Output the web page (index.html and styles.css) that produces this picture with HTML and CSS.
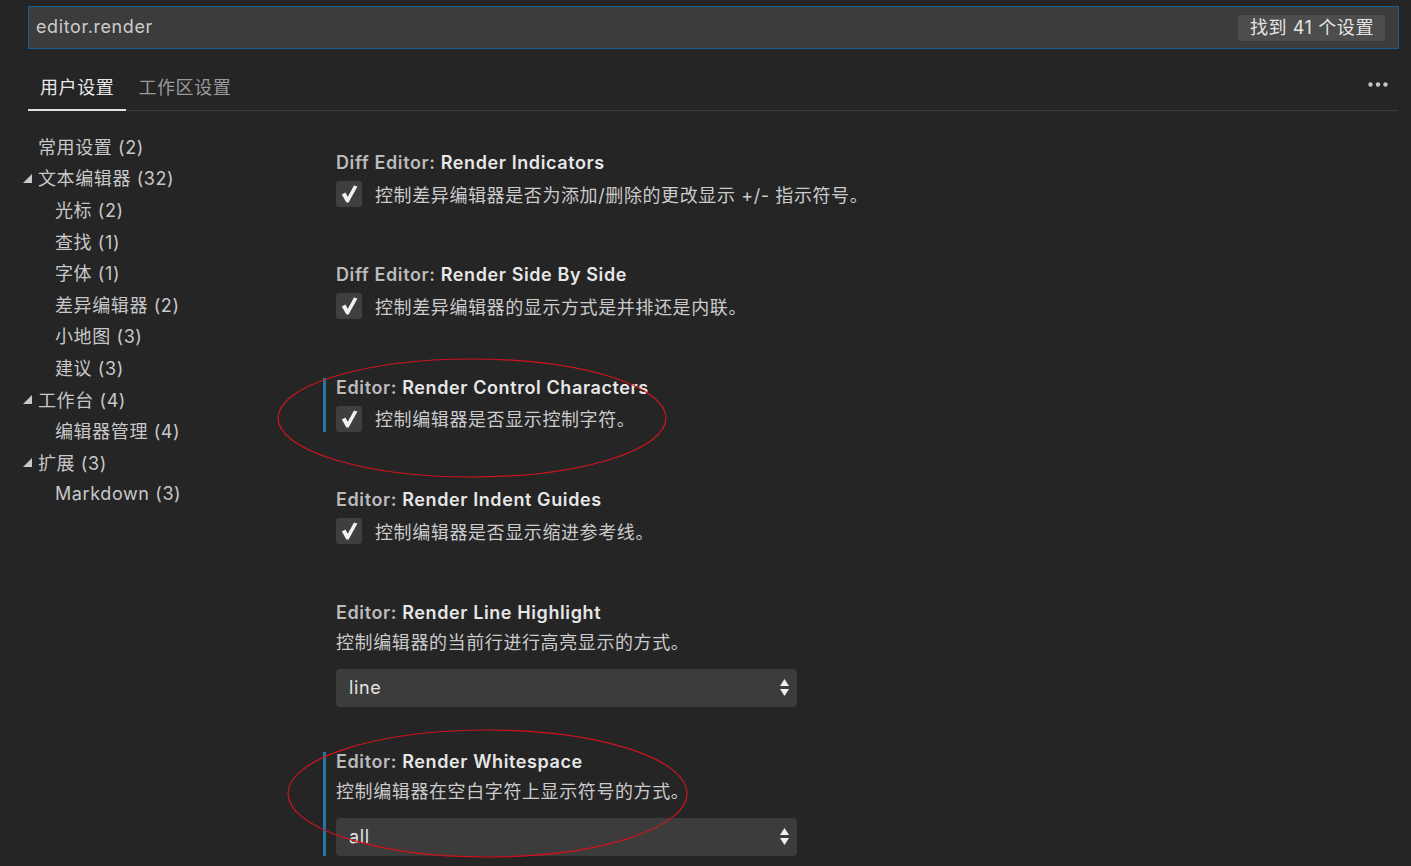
FILE: index.html
```html
<!DOCTYPE html>
<html lang="zh-CN">
<head>
  <meta charset="UTF-8" />
  <title>设置 - editor.render</title>
  <link rel="stylesheet" href="styles.css">
</head>
<body>
  <div class="page">
    <div class="search">
      <span class="search-text">editor.render</span>
      <span class="badge">找到 41 个设置</span>
    </div>

    <div class="tabs">
      <div class="tab active">用户设置</div>
      <div class="tab">工作区设置</div>
      <svg class="more" width="20" height="5" viewBox="0 0 20 5">
        <circle cx="2.5" cy="2.5" r="2.2" fill="#c5c5c5"/>
        <circle cx="10" cy="2.5" r="2.2" fill="#c5c5c5"/>
        <circle cx="17.5" cy="2.5" r="2.2" fill="#c5c5c5"/>
      </svg>
    </div>

    <div class="main">
      <ul class="toc">
        <li class="toc-item"><span class="twisty"></span>常用设置 (2)</li>
        <li class="toc-item"><span class="twisty"><svg width="9" height="9" viewBox="0 0 9 9"><polygon points="9,0 9,9 0,9" fill="#c8c8c8"/></svg></span>文本编辑器 (32)</li>
        <li class="toc-item child"><span class="twisty"></span>光标 (2)</li>
        <li class="toc-item child"><span class="twisty"></span>查找 (1)</li>
        <li class="toc-item child"><span class="twisty"></span>字体 (1)</li>
        <li class="toc-item child"><span class="twisty"></span>差异编辑器 (2)</li>
        <li class="toc-item child"><span class="twisty"></span>小地图 (3)</li>
        <li class="toc-item child"><span class="twisty"></span>建议 (3)</li>
        <li class="toc-item"><span class="twisty"><svg width="9" height="9" viewBox="0 0 9 9"><polygon points="9,0 9,9 0,9" fill="#c8c8c8"/></svg></span>工作台 (4)</li>
        <li class="toc-item child"><span class="twisty"></span>编辑器管理 (4)</li>
        <li class="toc-item"><span class="twisty"><svg width="9" height="9" viewBox="0 0 9 9"><polygon points="9,0 9,9 0,9" fill="#c8c8c8"/></svg></span>扩展 (3)</li>
        <li class="toc-item child"><span class="twisty"></span>Markdown (3)</li>
      </ul>

      <div class="settings">
        <div class="setting">
          <div class="title"><span class="cat">Diff Editor:</span> Render Indicators</div>
          <div class="check-row">
            <span class="checkbox"><svg width="26" height="26" viewBox="0 0 26 26"><path d="M5.8 13.6 L9.4 11.4 L11.8 15.8 L18 4.4 L21.4 5.6 L12.6 21.6 L10.4 21.6 Z" fill="#f2f2f2"/></svg></span>
            <span class="desc">控制差异编辑器是否为添加/删除的更改显示 +/- 指示符号。</span>
          </div>
        </div>

        <div class="setting">
          <div class="title"><span class="cat">Diff Editor:</span> Render Side By Side</div>
          <div class="check-row">
            <span class="checkbox"><svg width="26" height="26" viewBox="0 0 26 26"><path d="M5.8 13.6 L9.4 11.4 L11.8 15.8 L18 4.4 L21.4 5.6 L12.6 21.6 L10.4 21.6 Z" fill="#f2f2f2"/></svg></span>
            <span class="desc">控制差异编辑器的显示方式是并排还是内联。</span>
          </div>
        </div>

        <div class="setting focused">
          <div class="title"><span class="cat">Editor:</span> Render Control Characters</div>
          <div class="check-row">
            <span class="checkbox"><svg width="26" height="26" viewBox="0 0 26 26"><path d="M5.8 13.6 L9.4 11.4 L11.8 15.8 L18 4.4 L21.4 5.6 L12.6 21.6 L10.4 21.6 Z" fill="#f2f2f2"/></svg></span>
            <span class="desc">控制编辑器是否显示控制字符。</span>
          </div>
        </div>

        <div class="setting">
          <div class="title"><span class="cat">Editor:</span> Render Indent Guides</div>
          <div class="check-row">
            <span class="checkbox"><svg width="26" height="26" viewBox="0 0 26 26"><path d="M5.8 13.6 L9.4 11.4 L11.8 15.8 L18 4.4 L21.4 5.6 L12.6 21.6 L10.4 21.6 Z" fill="#f2f2f2"/></svg></span>
            <span class="desc">控制编辑器是否显示缩进参考线。</span>
          </div>
        </div>

        <div class="setting with-select">
          <div class="title"><span class="cat">Editor:</span> Render Line Highlight</div>
          <div class="desc block">控制编辑器的当前行进行高亮显示的方式。</div>
          <div class="select">
            <span>line</span>
            <svg width="9" height="18" viewBox="0 0 9 18"><polygon points="4.5,0 9,7 0,7" fill="#f0f0f0"/><polygon points="0,10 9,10 4.5,17" fill="#f0f0f0"/></svg>
          </div>
        </div>

        <div class="setting with-select focused">
          <div class="title"><span class="cat">Editor:</span> Render Whitespace</div>
          <div class="desc block">控制编辑器在空白字符上显示符号的方式。</div>
          <div class="select">
            <span>all</span>
            <svg width="9" height="18" viewBox="0 0 9 18"><polygon points="4.5,0 9,7 0,7" fill="#f0f0f0"/><polygon points="0,10 9,10 4.5,17" fill="#f0f0f0"/></svg>
          </div>
        </div>
      </div>
    </div>

    <svg class="marks" width="1411" height="866" viewBox="0 0 1411 866">
      <ellipse cx="472" cy="412" rx="194" ry="59" fill="none" stroke="#d0141e" stroke-width="1.2"/>
      <ellipse cx="487.5" cy="787.5" rx="199.5" ry="63.5" fill="none" stroke="#d0141e" stroke-width="1.2"/>
    </svg>
  </div>
</body>
</html>
```

FILE: styles.css
```css
* {
  box-sizing: border-box;
}
body {
  margin: 0;
  background: #252526;
  color: #cccccc;
  font-family: Inter, "Noto Sans CJK SC", sans-serif;
  font-size: 18px;
  letter-spacing: 0.6px;
  overflow: hidden;
}
.page {
  position: relative;
  width: 1411px;
  height: 866px;
}

/* search box */
.search {
  margin: 6px 12px 0 28px;
  height: 43px;
  border: 1px solid #155e96;
  background: #3c3c3c;
  display: flex;
  align-items: center;
  justify-content: space-between;
  padding: 0 13px 0 7px;
}
.search-text {
  color: #cccccc;
  padding-bottom: 2px;
}
.badge {
  background: #4d4d4d;
  color: #e4e4e4;
  height: 26px;
  line-height: 26px;
  padding: 0 11px 0 12px;
  border-radius: 3px;
}

/* tabs */
.tabs {
  margin: 0 13px 0 28px;
  height: 62px;
  border-bottom: 1px solid #3e3e3e;
  display: flex;
  align-items: flex-end;
}
.tab {
  height: 45px;
  line-height: 43px;
  padding: 0 12px;
  border-bottom: 2px solid transparent;
  margin-bottom: -1px;
  color: #9a9a9a;
}
.tab.active {
  color: #e8e8e8;
  border-bottom-color: #e0e0e0;
}
.more {
  margin-left: auto;
  margin-right: 10px;
  margin-bottom: 23px;
}

/* layout */
.main {
  display: flex;
}
.toc {
  list-style: none;
  margin: 0;
  padding: 19px 0 0 0;
  width: 323px;
  flex: none;
}
.toc-item {
  height: 31.6px;
  display: flex;
  align-items: center;
  padding-left: 23px;
  color: #c8c8c8;
}
.toc-item.child {
  padding-left: 40px;
}
.twisty {
  width: 15px;
  display: flex;
  align-items: center;
  padding-top: 2px;
}

/* settings list */
.settings {
  padding-top: 42px;
  flex: 1;
}
.setting {
  border-left: 3px solid transparent;
  padding-left: 10px;
  margin-bottom: 58.4px;
}
.setting.focused {
  border-left-color: #227aa3;
}
.setting.with-select {
  margin-bottom: 45.4px;
}
.title {
  line-height: 20px;
  height: 20px;
  font-weight: 600;
  color: #e7e7e7;
  white-space: nowrap;
}
.title .cat {
  color: #bbbbbb;
}
.check-row {
  margin-top: 8px;
  height: 26px;
  display: flex;
  align-items: center;
  gap: 13px;
}
.checkbox {
  width: 26px;
  height: 26px;
  background: #3f3f3f;
  border-radius: 3px;
  flex: none;
}
.checkbox svg {
  display: block;
}
.desc {
  color: #cbcbcb;
  white-space: nowrap;
  padding-bottom: 1px;
}
.desc.block {
  margin-top: 8px;
  line-height: 24px;
  height: 24px;
}
.select {
  margin-top: 14px;
  width: 461px;
  height: 38px;
  background: #3c3c3c;
  border-radius: 4px;
  display: flex;
  align-items: center;
  justify-content: space-between;
  padding: 0 8px 0 13px;
  color: #e4e4e4;
}

/* annotation marks drawn over the screenshot */
.marks {
  position: absolute;
  left: 0;
  top: 0;
  pointer-events: none;
}
```
